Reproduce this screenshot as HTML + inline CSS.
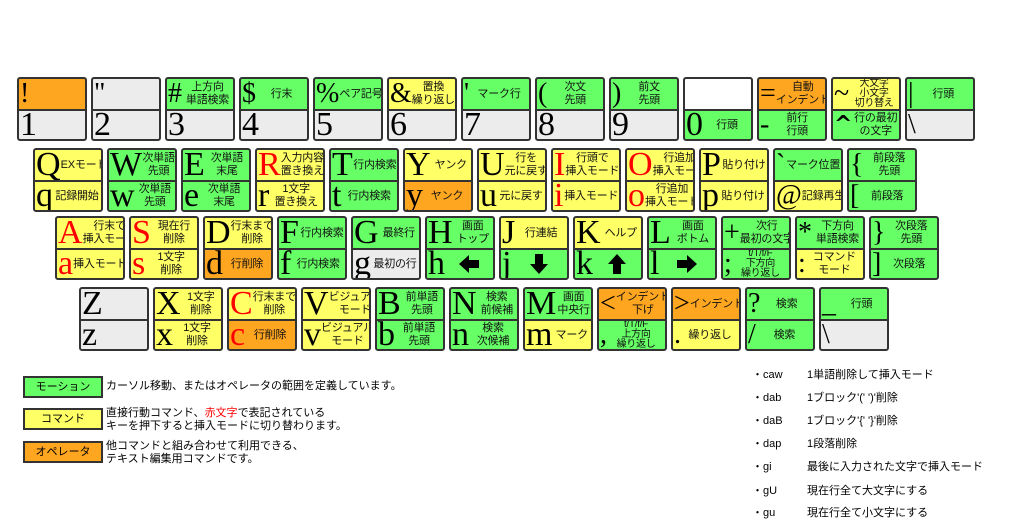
<!DOCTYPE html>
<html><head><meta charset="utf-8"><style>
body{margin:0;width:1024px;height:528px;background:#fff;position:relative;overflow:hidden;font-family:"Liberation Sans","Noto Sans CJK JP",sans-serif}
.k{position:absolute;width:66px;height:60px;border:2px solid #333;border-radius:3px;overflow:hidden;background:#333;display:flex;flex-direction:column;gap:2px}
.h{display:flex;align-items:center;overflow:hidden;height:30px}
.h+.h{flex:1;height:auto}
.c{font-family:"Liberation Serif",serif;font-size:34px;line-height:1;padding-left:1px}
.s{font-size:28px}
.l{flex:1;text-align:center;font-size:11px;line-height:13px;white-space:nowrap;letter-spacing:-0.2px;color:#111}
.l3{line-height:10px;font-size:10px;letter-spacing:-0.3px}
.ar{flex:1;display:flex;justify-content:center}
.g{background:#66ff66}.y{background:#ffff66}.o{background:#ffa620}.w{background:#ececec}.wh{background:#fff}
.r{color:#f00}
.lg{position:absolute;left:23px;width:76px;height:18px;border:2px solid #333;font-size:11px;text-align:center;line-height:18px}
.lt{position:absolute;left:106px;font-size:11px;line-height:13px}
.li{position:absolute;left:752px;font-size:11px}
.li b{font-weight:normal;display:inline-block;width:44px}
</style></head><body>

<!-- Row 1 -->
<div class="k" style="left:17px;top:77px"><div class="h o"><span class="c s">!</span></div><div class="h w"><span class="c">1</span></div></div>
<div class="k" style="left:91px;top:77px"><div class="h w"><span class="c s">"</span></div><div class="h w"><span class="c">2</span></div></div>
<div class="k" style="left:165px;top:77px"><div class="h g"><span class="c s">#</span><span class="l">上方向<br>単語検索</span></div><div class="h w"><span class="c">3</span></div></div>
<div class="k" style="left:239px;top:77px"><div class="h g"><span class="c s">$</span><span class="l">行末</span></div><div class="h w"><span class="c">4</span></div></div>
<div class="k" style="left:313px;top:77px"><div class="h g"><span class="c s">%</span><span class="l">ペア記号</span></div><div class="h w"><span class="c">5</span></div></div>
<div class="k" style="left:387px;top:77px"><div class="h y"><span class="c s">&amp;</span><span class="l">置換<br>繰り返し</span></div><div class="h w"><span class="c">6</span></div></div>
<div class="k" style="left:461px;top:77px"><div class="h g"><span class="c s">'</span><span class="l">マーク行</span></div><div class="h w"><span class="c">7</span></div></div>
<div class="k" style="left:535px;top:77px"><div class="h g"><span class="c s">(</span><span class="l">次文<br>先頭</span></div><div class="h w"><span class="c">8</span></div></div>
<div class="k" style="left:609px;top:77px"><div class="h g"><span class="c s">)</span><span class="l">前文<br>先頭</span></div><div class="h w"><span class="c">9</span></div></div>
<div class="k" style="left:683px;top:77px"><div class="h wh"></div><div class="h g"><span class="c">0</span><span class="l">行頭</span></div></div>
<div class="k" style="left:757px;top:77px"><div class="h o"><span class="c s">=</span><span class="l">自動<br>インデント</span></div><div class="h g"><span class="c s">-</span><span class="l">前行<br>行頭</span></div></div>
<div class="k" style="left:831px;top:77px"><div class="h y"><span class="c s">~</span><span class="l l3">大文字<br>小文字<br>切り替え</span></div><div class="h g"><span class="c s" style="font-size:22px;font-family:'DejaVu Sans';font-weight:bold">^</span><span class="l">行の最初<br>の文字</span></div></div>
<div class="k" style="left:905px;top:77px"><div class="h g"><span class="c s">|</span><span class="l">行頭</span></div><div class="h w"><span class="c s">\</span></div></div>

<!-- Row 2 -->
<div class="k" style="left:33px;top:148px"><div class="h y"><span class="c">Q</span><span class="l">EXモード</span></div><div class="h y"><span class="c">q</span><span class="l">記録開始</span></div></div>
<div class="k" style="left:107px;top:148px"><div class="h g"><span class="c">W</span><span class="l">次単語<br>先頭</span></div><div class="h g"><span class="c">w</span><span class="l">次単語<br>先頭</span></div></div>
<div class="k" style="left:181px;top:148px"><div class="h g"><span class="c">E</span><span class="l">次単語<br>末尾</span></div><div class="h g"><span class="c">e</span><span class="l">次単語<br>末尾</span></div></div>
<div class="k" style="left:255px;top:148px"><div class="h y"><span class="c r">R</span><span class="l">入力内容<br>置き換え</span></div><div class="h y"><span class="c">r</span><span class="l">1文字<br>置き換え</span></div></div>
<div class="k" style="left:329px;top:148px"><div class="h g"><span class="c">T</span><span class="l">行内検索</span></div><div class="h g"><span class="c">t</span><span class="l">行内検索</span></div></div>
<div class="k" style="left:403px;top:148px"><div class="h y"><span class="c">Y</span><span class="l">ヤンク</span></div><div class="h o"><span class="c">y</span><span class="l">ヤンク</span></div></div>
<div class="k" style="left:477px;top:148px"><div class="h y"><span class="c">U</span><span class="l">行を<br>元に戻す</span></div><div class="h y"><span class="c">u</span><span class="l">元に戻す</span></div></div>
<div class="k" style="left:551px;top:148px"><div class="h y"><span class="c r">I</span><span class="l">行頭で<br>挿入モード</span></div><div class="h y"><span class="c r">i</span><span class="l">挿入モード</span></div></div>
<div class="k" style="left:625px;top:148px"><div class="h y"><span class="c r">O</span><span class="l">行追加<br>挿入モード</span></div><div class="h y"><span class="c r">o</span><span class="l">行追加<br>挿入モード</span></div></div>
<div class="k" style="left:699px;top:148px"><div class="h y"><span class="c">P</span><span class="l">貼り付け</span></div><div class="h y"><span class="c">p</span><span class="l">貼り付け</span></div></div>
<div class="k" style="left:773px;top:148px"><div class="h g"><span class="c s">`</span><span class="l">マーク位置</span></div><div class="h y"><span class="c s">@</span><span class="l">記録再生</span></div></div>
<div class="k" style="left:847px;top:148px"><div class="h g"><span class="c s">{</span><span class="l">前段落<br>先頭</span></div><div class="h g"><span class="c s">[</span><span class="l">前段落</span></div></div>

<!-- Row 3 -->
<div class="k" style="left:55px;top:216px"><div class="h y"><span class="c r">A</span><span class="l">行末で<br>挿入モード</span></div><div class="h y"><span class="c r">a</span><span class="l">挿入モード</span></div></div>
<div class="k" style="left:129px;top:216px"><div class="h y"><span class="c r">S</span><span class="l">現在行<br>削除</span></div><div class="h y"><span class="c r">s</span><span class="l">1文字<br>削除</span></div></div>
<div class="k" style="left:203px;top:216px"><div class="h y"><span class="c">D</span><span class="l">行末まで<br>削除</span></div><div class="h o"><span class="c">d</span><span class="l">行削除</span></div></div>
<div class="k" style="left:277px;top:216px"><div class="h g"><span class="c">F</span><span class="l">行内検索</span></div><div class="h g"><span class="c">f</span><span class="l">行内検索</span></div></div>
<div class="k" style="left:351px;top:216px"><div class="h g"><span class="c">G</span><span class="l">最終行</span></div><div class="h w"><span class="c">g</span><span class="l">最初の行</span></div></div>
<div class="k" style="left:425px;top:216px"><div class="h g"><span class="c">H</span><span class="l">画面<br>トップ</span></div><div class="h g"><span class="c">h</span><span class="ar"><svg width="22" height="20" viewBox="0 0 22 20"><path d="M1 10 L11 1 L11 6 L21 6 L21 14 L11 14 L11 19 Z"/></svg></span></div></div>
<div class="k" style="left:499px;top:216px"><div class="h y"><span class="c">J</span><span class="l">行連結</span></div><div class="h g"><span class="c">j</span><span class="ar"><svg width="20" height="22" viewBox="0 0 20 22"><path d="M10 21 L1 11 L6 11 L6 1 L14 1 L14 11 L19 11 Z"/></svg></span></div></div>
<div class="k" style="left:573px;top:216px"><div class="h y"><span class="c">K</span><span class="l">ヘルプ</span></div><div class="h g"><span class="c">k</span><span class="ar"><svg width="20" height="22" viewBox="0 0 20 22"><path d="M10 1 L1 11 L6 11 L6 21 L14 21 L14 11 L19 11 Z"/></svg></span></div></div>
<div class="k" style="left:647px;top:216px"><div class="h g"><span class="c">L</span><span class="l">画面<br>ボトム</span></div><div class="h g"><span class="c">l</span><span class="ar"><svg width="22" height="20" viewBox="0 0 22 20"><path d="M21 10 L11 1 L11 6 L1 6 L1 14 L11 14 L11 19 Z"/></svg></span></div></div>
<div class="k" style="left:721px;top:216px"><div class="h g"><span class="c s">+</span><span class="l">次行<br>最初の文字</span></div><div class="h g"><span class="c s">;</span><span class="l l3">t/T/f/F<br>下方向<br>繰り返し</span></div></div>
<div class="k" style="left:795px;top:216px"><div class="h g"><span class="c s">*</span><span class="l">下方向<br>単語検索</span></div><div class="h y"><span class="c s">:</span><span class="l">コマンド<br>モード</span></div></div>
<div class="k" style="left:869px;top:216px"><div class="h g"><span class="c s">}</span><span class="l">次段落<br>先頭</span></div><div class="h g"><span class="c s">]</span><span class="l">次段落</span></div></div>

<!-- Row 4 -->
<div class="k" style="left:79px;top:287px"><div class="h w"><span class="c">Z</span></div><div class="h w"><span class="c">z</span></div></div>
<div class="k" style="left:153px;top:287px"><div class="h y"><span class="c">X</span><span class="l">1文字<br>削除</span></div><div class="h y"><span class="c">x</span><span class="l">1文字<br>削除</span></div></div>
<div class="k" style="left:227px;top:287px"><div class="h y"><span class="c r">C</span><span class="l">行末まで<br>削除</span></div><div class="h o"><span class="c r">c</span><span class="l">行削除</span></div></div>
<div class="k" style="left:301px;top:287px"><div class="h y"><span class="c">V</span><span class="l">ビジュアル<br>モード</span></div><div class="h y"><span class="c">v</span><span class="l">ビジュアル<br>モード</span></div></div>
<div class="k" style="left:375px;top:287px"><div class="h g"><span class="c">B</span><span class="l">前単語<br>先頭</span></div><div class="h g"><span class="c">b</span><span class="l">前単語<br>先頭</span></div></div>
<div class="k" style="left:449px;top:287px"><div class="h g"><span class="c">N</span><span class="l">検索<br>前候補</span></div><div class="h g"><span class="c">n</span><span class="l">検索<br>次候補</span></div></div>
<div class="k" style="left:523px;top:287px"><div class="h g"><span class="c">M</span><span class="l">画面<br>中央行</span></div><div class="h y"><span class="c">m</span><span class="l">マーク</span></div></div>
<div class="k" style="left:597px;top:287px"><div class="h o"><span class="c s">&lt;</span><span class="l">インデント<br>下げ</span></div><div class="h g"><span class="c s">,</span><span class="l l3">t/T/f/F<br>上方向<br>繰り返し</span></div></div>
<div class="k" style="left:671px;top:287px"><div class="h o"><span class="c s">&gt;</span><span class="l">インデント</span></div><div class="h y"><span class="c s">.</span><span class="l">繰り返し</span></div></div>
<div class="k" style="left:745px;top:287px"><div class="h g"><span class="c s">?</span><span class="l">検索</span></div><div class="h g"><span class="c s">/</span><span class="l">検索</span></div></div>
<div class="k" style="left:819px;top:287px"><div class="h g"><span class="c s">_</span><span class="l">行頭</span></div><div class="h w"><span class="c s">\</span></div></div>

<!-- Legend -->
<div class="lg g" style="top:376px">モーション</div>
<div class="lt" style="top:380px">カーソル移動、またはオペレータの範囲を定義しています。</div>
<div class="lg y" style="top:408px">コマンド</div>
<div class="lt" style="top:407px">直接行動コマンド、<span class="r">赤文字</span>で表記されている<br>キーを押下すると挿入モードに切り替わります。</div>
<div class="lg o" style="top:441px">オペレータ</div>
<div class="lt" style="top:440px">他コマンドと組み合わせて利用できる、<br>テキスト編集用コマンドです。</div>

<div class="li" style="top:366px">・<b>caw</b>1単語削除して挿入モード</div>
<div class="li" style="top:389px">・<b>dab</b>1ブロック'(' ')'削除</div>
<div class="li" style="top:412px">・<b>daB</b>1ブロック'{' '}'削除</div>
<div class="li" style="top:435px">・<b>dap</b>1段落削除</div>
<div class="li" style="top:458px">・<b>gi</b>最後に入力された文字で挿入モード</div>
<div class="li" style="top:482px">・<b>gU</b>現在行全て大文字にする</div>
<div class="li" style="top:504px">・<b>gu</b>現在行全て小文字にする</div>
</body></html>
